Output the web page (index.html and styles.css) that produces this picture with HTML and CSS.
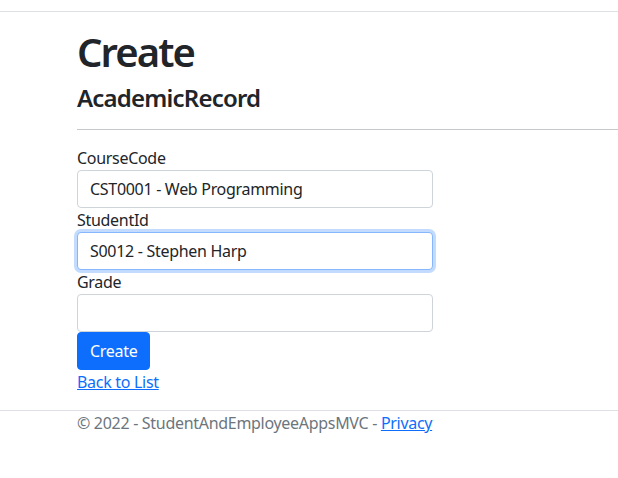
FILE: index.html
```html
<!DOCTYPE html>
<html lang="en">
<head>
  <meta charset="UTF-8">
  <meta name="viewport" content="width=device-width, initial-scale=1.0">
  <title>Create - StudentAndEmployeeAppsMVC</title>
  <link rel="stylesheet" href="styles.css">
</head>

<body>
  <header class="topbar"></header>

  <main class="container">
    <h1>Create</h1>
    <h4>AcademicRecord</h4>
    <hr>

    <div class="col">
      <form>
        <div class="form-group">
          <label for="CourseCode">CourseCode</label>
          <input class="form-control" id="CourseCode" type="text" value="CST0001 - Web Programming">
        </div>
        <div class="form-group">
          <label for="StudentId">StudentId</label>
          <input class="form-control focused" id="StudentId" type="text" value="S0012 - Stephen Harp">
        </div>
        <div class="form-group">
          <label for="Grade">Grade</label>
          <input class="form-control" id="Grade" type="text" value="">
        </div>
        <div class="form-group">
          <button type="button" class="btn">Create</button>
        </div>
      </form>
    </div>

    <div>
      <a href="#">Back to List</a>
    </div>
  </main>

  <footer class="footer">
    <div class="container">
      &copy; 2022 - StudentAndEmployeeAppsMVC - <a href="#">Privacy</a>
    </div>
  </footer>
</body>
</html>
```

FILE: styles.css
```css
body {
  margin: 0;
  font-family: "Segoe UI", "Noto Sans", "Open Sans", sans-serif;
  font-size: 16px;
  line-height: 1.5;
  letter-spacing: -0.3px;
  color: #212529;
  background-color: #fff;
}

.topbar {
  height: 11px;
  border-bottom: 1px solid #dee2e6;
  margin-bottom: 16px;
}

.container {
  padding-left: 77px;
}

main.container {
  padding-bottom: 16px;
}

h1, h4 {
  margin: 0 0 8px 0;
  font-weight: 600;
  line-height: 1.2;
}

h1 {
  font-size: 40px;
  letter-spacing: -1.9px;
}

h4 {
  font-size: 24px;
  letter-spacing: -0.8px;
}

hr {
  margin: 16px 0;
  border: 0;
  border-top: 1px solid #c8c9ca;
}

.col {
  width: 356px;
}

form {
  margin: 0;
}

label {
  display: inline-block;
}

.form-control {
  display: block;
  box-sizing: border-box;
  width: 100%;
  height: 38px;
  padding: 6px 12px;
  font-family: inherit;
  font-size: 16px;
  line-height: 1.5;
  letter-spacing: inherit;
  color: #212529;
  background-color: #fff;
  border: 1px solid #ced4da;
  border-radius: 4px;
  outline: none;
}

.form-control.focused {
  border-color: #86b7fe;
  box-shadow: 0 0 0 3px rgba(13, 110, 253, 0.25);
}

.btn {
  height: 38px;
  padding: 6px 12px;
  font-family: inherit;
  font-size: 16px;
  line-height: 1.5;
  letter-spacing: inherit;
  color: #fff;
  background-color: #0d6efd;
  border: 1px solid #0d6efd;
  border-radius: 4px;
  cursor: pointer;
}

a {
  color: #0d6efd;
}

.footer {
  border-top: 1px solid #dee2e6;
  color: #6c757d;
}
```
